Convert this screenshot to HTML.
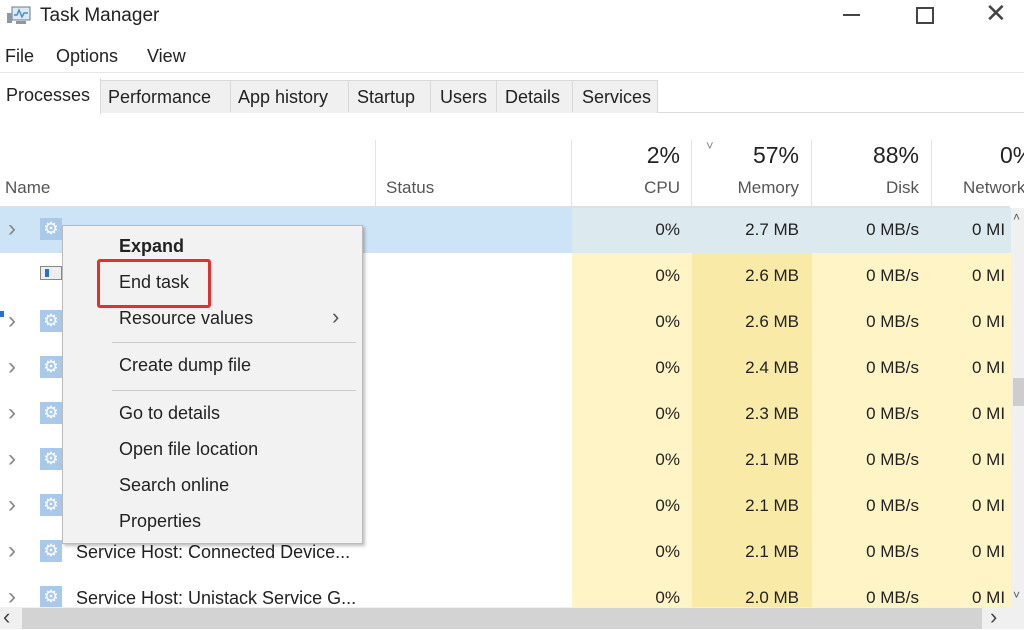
<!DOCTYPE html><html><head><style>
body{margin:0;width:1024px;height:629px;overflow:hidden;background:#fff;font-family:"Liberation Sans",sans-serif;color:#222;position:relative}
.a{position:absolute;white-space:nowrap}
.r{text-align:right}
.g{color:#555}
</style></head><body>
<svg class="a" style="left:6px;top:5px" width="26" height="22" viewBox="0 0 26 22"><rect x="6" y="2" width="18" height="13" fill="#dfe9f3" stroke="#6b7a8a"/><polyline points="8,10 11,10 13,5 16,12 18,8 22,8" fill="none" stroke="#3a8fd0" stroke-width="1.4"/><rect x="1" y="8" width="5" height="10" fill="#8a98a8"/><rect x="10" y="16" width="10" height="3" fill="#8a98a8"/></svg>
<div class="a" style="left:40px;top:5px;font-size:19px">Task Manager</div>
<div class="a" style="left:843px;top:14px;width:17px;height:2px;background:#444"></div>
<div class="a" style="left:916px;top:7px;width:14px;height:13px;border:2px solid #444"></div>
<div class="a" style="left:985px;top:-2px;font-size:26px;color:#444">✕</div>
<div class="a" style="left:5px;top:46px;font-size:18px">File</div>
<div class="a" style="left:56px;top:46px;font-size:18px">Options</div>
<div class="a" style="left:147px;top:46px;font-size:18px">View</div>
<div class="a" style="left:0;top:72px;width:1024px;height:1px;background:#e6e6e6"></div>
<div class="a" style="left:0;top:112px;width:1024px;height:1px;background:#dcdcdc"></div>
<div class="a" style="left:100px;top:80px;width:556px;height:32px;background:#f0f0f0;border:1px solid #d9d9d9;border-bottom:none"></div>
<div class="a" style="left:0;top:78px;width:100px;height:36px;background:#fff;border-right:1px solid #d9d9d9"></div>
<div class="a" style="left:6px;top:85px;font-size:18px">Processes</div>
<div class="a" style="left:108px;top:87px;font-size:18px">Performance</div>
<div class="a" style="left:230px;top:80px;width:1px;height:32px;background:#d9d9d9"></div>
<div class="a" style="left:238px;top:87px;font-size:18px">App history</div>
<div class="a" style="left:348px;top:80px;width:1px;height:32px;background:#d9d9d9"></div>
<div class="a" style="left:357px;top:87px;font-size:18px">Startup</div>
<div class="a" style="left:430px;top:80px;width:1px;height:32px;background:#d9d9d9"></div>
<div class="a" style="left:440px;top:87px;font-size:18px">Users</div>
<div class="a" style="left:496px;top:80px;width:1px;height:32px;background:#d9d9d9"></div>
<div class="a" style="left:505px;top:87px;font-size:18px">Details</div>
<div class="a" style="left:572px;top:80px;width:1px;height:32px;background:#d9d9d9"></div>
<div class="a" style="left:582px;top:87px;font-size:18px">Services</div>
<div class="a" style="left:375px;top:140px;width:1px;height:66px;background:#e3e3e3"></div>
<div class="a" style="left:571px;top:140px;width:1px;height:66px;background:#e3e3e3"></div>
<div class="a" style="left:691px;top:140px;width:1px;height:66px;background:#e3e3e3"></div>
<div class="a" style="left:811px;top:140px;width:1px;height:66px;background:#e3e3e3"></div>
<div class="a" style="left:931px;top:140px;width:1px;height:66px;background:#e3e3e3"></div>
<div class="a" style="left:0;top:206px;width:1010px;height:2px;background:#e0e0e0"></div>
<div class="a g" style="left:5px;top:178px;font-size:17px">Name</div>
<div class="a g" style="left:386px;top:178px;font-size:17px">Status</div>
<div class="a r" style="left:572px;width:108px;top:142px;font-size:23px">2%</div>
<div class="a r g" style="left:572px;width:108px;top:178px;font-size:17px">CPU</div>
<div class="a" style="left:706px;top:138px;font-size:13px;color:#888">˅</div>
<div class="a r" style="left:692px;width:107px;top:142px;font-size:23px">57%</div>
<div class="a r g" style="left:692px;width:107px;top:178px;font-size:17px">Memory</div>
<div class="a r" style="left:812px;width:107px;top:142px;font-size:23px">88%</div>
<div class="a r g" style="left:812px;width:107px;top:178px;font-size:17px">Disk</div>
<div class="a" style="left:1000px;top:142px;font-size:23px">0%</div>
<div class="a g" style="left:963px;top:178px;font-size:17px">Network</div>
<div class="a" style="left:572px;top:208px;width:120px;height:399px;background:#fff4c6"></div>
<div class="a" style="left:692px;top:208px;width:120px;height:399px;background:#f9eaa8"></div>
<div class="a" style="left:812px;top:208px;width:199px;height:399px;background:#fff4c6"></div>
<div class="a" style="left:0;top:208px;width:572px;height:45px;background:#cde4f7"></div>
<div class="a" style="left:572px;top:208px;width:439px;height:45px;background:#dce9ee"></div>
<div id="rows"></div>
<script>
var mem=["2.7","2.6","2.6","2.4","2.3","2.1","2.1","2.1","2.0"],h="";
for(var i=0;i<9;i++){var y=220+i*46;
h+='<div class="a r" style="left:572px;width:108px;top:'+y+'px;font-size:17px">0%</div>';
h+='<div class="a r" style="left:692px;width:107px;top:'+y+'px;font-size:17px">'+mem[i]+' MB</div>';
h+='<div class="a r" style="left:812px;width:107px;top:'+y+'px;font-size:17px">0 MB/s</div>';
h+='<div class="a" style="left:972px;top:'+y+'px;font-size:17px">0 MI</div>';
if(i!=1){h+='<div class="a" style="left:8px;top:'+(y-5)+'px;font-size:24px;color:#888">›</div>';
h+='<div class="a" style="left:40px;top:'+(y-2)+'px;width:22px;height:22px;background:#a9c9ea;color:#fff;font-size:17px;text-align:center;line-height:22px">⚙</div>';}
else h+='<div class="a" style="left:40px;top:'+(y)+'px;width:20px;height:12px;border:1px solid #888;background:#eee"><div style="margin:2px 0 0 4px;width:4px;height:8px;background:#2a6fd0"></div></div>';}
document.getElementById('rows').innerHTML=h;
</script>
<div class="a" style="left:76px;top:542px;font-size:18px">Service Host: Connected Device...</div>
<div class="a" style="left:76px;top:588px;font-size:18px">Service Host: Unistack Service G...</div>
<div class="a" style="left:1011px;top:208px;width:13px;height:399px;background:#f0f0f0"></div>
<div class="a" style="left:1013px;top:378px;width:11px;height:28px;background:#cdcdcd"></div>
<div class="a" style="left:1013px;top:210px;font-size:12px;color:#555">˄</div>
<div class="a" style="left:1013px;top:588px;font-size:12px;color:#555">˅</div>
<div class="a" style="left:0;top:607px;width:1024px;height:22px;background:#f0f0f0"></div>
<div class="a" style="left:22px;top:608px;width:960px;height:21px;background:#d3d3d3"></div>
<div class="a" style="left:3px;top:604px;font-size:22px;color:#444">‹</div>
<div class="a" style="left:990px;top:604px;font-size:22px;color:#444">›</div>
<div class="a" style="left:0;top:311px;width:4px;height:6px;background:#2a6fd0"></div>
<div class="a" style="left:62px;top:225px;width:299px;height:317px;background:#f2f2f2;border:1px solid #bbb;box-shadow:2px 2px 3px rgba(0,0,0,.25)"></div>
<div class="a" style="left:119px;top:236px;font-size:18px;font-weight:bold">Expand</div>
<div class="a" style="left:97px;top:259px;width:108px;height:43px;border:3px solid #e03030;border-radius:3px"></div>
<div class="a" style="left:119px;top:272px;font-size:18px">End task</div>
<div class="a" style="left:119px;top:308px;font-size:18px">Resource values</div>
<div class="a" style="left:332px;top:304px;font-size:22px;color:#555">›</div>
<div class="a" style="left:112px;top:342px;width:244px;height:1px;background:#ccc"></div>
<div class="a" style="left:119px;top:355px;font-size:18px">Create dump file</div>
<div class="a" style="left:112px;top:390px;width:244px;height:1px;background:#ccc"></div>
<div class="a" style="left:119px;top:403px;font-size:18px">Go to details</div>
<div class="a" style="left:119px;top:439px;font-size:18px">Open file location</div>
<div class="a" style="left:119px;top:475px;font-size:18px">Search online</div>
<div class="a" style="left:119px;top:511px;font-size:18px">Properties</div>
</body></html>
